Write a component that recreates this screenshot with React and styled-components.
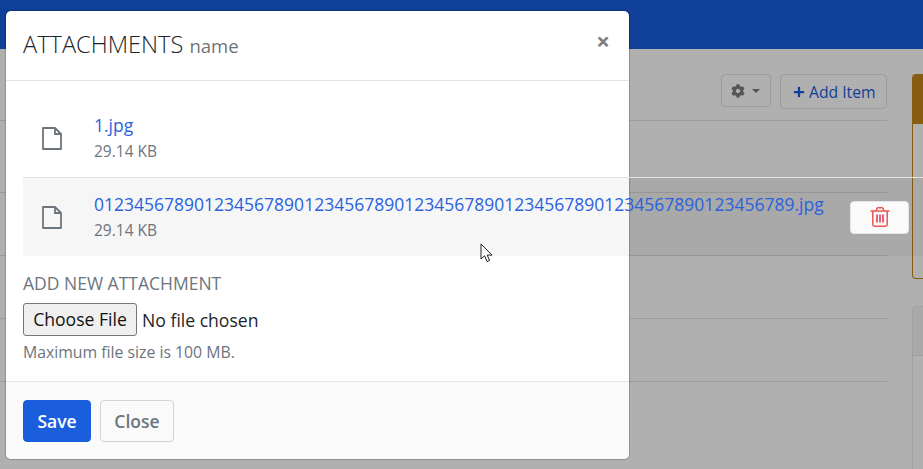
import React from 'react'
import styled, { createGlobalStyle } from 'styled-components'
import { FaCog, FaPlus } from 'react-icons/fa'

const LONG_NAME = '0123456789'.repeat(7) + '.jpg'

const files = [
  { name: '1.jpg', size: '29.14 KB' },
  { name: LONG_NAME, size: '29.14 KB', active: true },
]

function DocIcon() {
  return (
    <svg width="20" height="23" viewBox="0 0 20 23" fill="none" stroke="currentColor" strokeWidth="1.8">
      <path d="M1 1h12l6 6v15H1z" strokeLinejoin="round" />
      <path d="M13 1v6h6" />
    </svg>
  )
}

function TrashIcon() {
  return (
    <svg width="20" height="20" viewBox="0 0 20 20" fill="none" stroke="currentColor" strokeWidth="1.5">
      <path d="M0.500 4h19" />
      <path d="M6 4l1-2.600c.2-.4.500-.6 1-.6h4c.5 0 .8.2 1 .6l1 2.600" />
      <path d="M2.800 4v13.500c0 1 .7 1.700 1.700 1.700h11c1 0 1.700-.7 1.700-1.700V4" />
      <path d="M7 7.500v8M10 7.500v8M13 7.500v8" stroke="#e0304a" />
    </svg>
  )
}

export default function App() {
  return (
    <Page>
      <GlobalStyle />
      <TopBar />
      <Content>
        <Main>
          <Toolbar>
            <SettingsButton>
              <FaCog size={14} />
              <Caret />
            </SettingsButton>
            <AddButton>
              <FaPlus size={12} />
              Add Item
            </AddButton>
          </Toolbar>
          <TableRow $height={72} />
          <TableRow $height={63} />
          <TableRow $height={63} />
          <TableRow $height={63} />
        </Main>
        <Side>
          <Panel $color="#875b10">
            <PanelHead $color="#875b10" />
          </Panel>
          <Panel $color="#a0a0a0" $last>
            <PanelHead $color="#a9a9a9" $line="#9c9c9c" />
          </Panel>
        </Side>
      </Content>

      <Modal>
        <ModalHeader>
          <Title>
            ATTACHMENTS <TitleName>name</TitleName>
          </Title>
          <CloseX>×</CloseX>
        </ModalHeader>
        <ModalBody>
          <FileList>
            {files.map((file) => (
              <FileRow key={file.name} $active={file.active}>
                <FileIcon>
                  <DocIcon />
                </FileIcon>
                <FileInfo>
                  <FileName href="#">{file.name}</FileName>
                  <FileSize>{file.size}</FileSize>
                </FileInfo>
                {file.active && (
                  <DeleteButton>
                    <TrashIcon />
                  </DeleteButton>
                )}
              </FileRow>
            ))}
          </FileList>
          <AddSection>
            <SectionLabel>ADD NEW ATTACHMENT</SectionLabel>
            <FilePicker>
              <ChooseButton>Choose File</ChooseButton>
              <span>No file chosen</span>
            </FilePicker>
            <Hint>Maximum file size is 100 MB.</Hint>
          </AddSection>
        </ModalBody>
        <ModalFooter>
          <SaveButton>Save</SaveButton>
          <CloseButton>Close</CloseButton>
        </ModalFooter>
      </Modal>

      <Pointer width="14" height="20" viewBox="0 0 14 20">
        <path
          d="M1 1v15l3.6-3.2L7 18.500l2.600-1.100-2.400-5.300H12z"
          fill="#fff"
          stroke="#222"
          strokeWidth="1"
        />
      </Pointer>
    </Page>
  )
}

const GlobalStyle = createGlobalStyle`
  html, body {
    margin: 0;
    padding: 0;
    height: 100%;
    overflow: hidden;
  }
  body {
    font-family: "Open Sans", "Noto Sans", sans-serif;
  }
`

const Page = styled.div`
  position: relative;
  width: 923px;
  height: 469px;
  overflow: hidden;
  background: #b0b0b0;
`

const TopBar = styled.div`
  height: 49px;
  background: #0f3f96;
`

const Content = styled.div`
  display: flex;
  justify-content: space-between;
  padding-top: 25px;
`

const Main = styled.div`
  width: 887px;
`

const Toolbar = styled.div`
  display: flex;
  justify-content: flex-end;
  align-items: flex-start;
  gap: 9px;
  height: 46px;
  border-bottom: 1px solid #9c9c9c;
`

const ToolButton = styled.div`
  display: flex;
  align-items: center;
  box-sizing: border-box;
  border: 1px solid #9c9c9c;
  border-radius: 4px;
`

const SettingsButton = styled(ToolButton)`
  width: 50px;
  height: 33px;
  padding-left: 9px;
  gap: 7px;
  color: #555;
`

const Caret = styled.span`
  border-left: 4.5px solid transparent;
  border-right: 4.5px solid transparent;
  border-top: 4.5px solid #555;
`

const AddButton = styled(ToolButton)`
  width: 107px;
  height: 35px;
  padding-left: 12px;
  gap: 4px;
  color: #123f96;
  font-size: 15.7px;
  font-weight: 500;
`

const TableRow = styled.div`
  box-sizing: border-box;
  height: ${(p) => p.$height}px;
  border-bottom: 1px solid #9c9c9c;
`

const Side = styled.div`
  display: flex;
  flex-direction: column;
  gap: 27px;
  width: 11px;
`

const Panel = styled.div`
  box-sizing: border-box;
  height: ${(p) => (p.$last ? '200px' : '205px')};
  border: 1px solid ${(p) => p.$color};
  border-right: 0;
  border-radius: 4px 0 0 4px;
`

const PanelHead = styled.div`
  height: 48px;
  background: ${(p) => p.$color};
  border-bottom: 1px solid ${(p) => p.$line || p.$color};
  border-top-left-radius: 3px;
`

const Modal = styled.div`
  position: absolute;
  left: 6px;
  top: 11px;
  display: flex;
  flex-direction: column;
  box-sizing: border-box;
  width: 623px;
  height: 448px;
  background: #fff;
  border-radius: 5px;
  box-shadow: 0 0 1px 1px rgba(0, 0, 0, 0.18);
`

const ModalHeader = styled.div`
  display: flex;
  justify-content: space-between;
  align-items: flex-start;
  box-sizing: border-box;
  height: 70px;
  padding: 17px 20px 0 17px;
  border-bottom: 1px solid #e2e5ec;
`

const Title = styled.div`
  font-size: 23.6px;
  font-weight: 300;
  line-height: 32px;
  color: #212529;
`

const TitleName = styled.span`
  font-size: 18.500px;
  font-weight: 400;
  color: #6c757d;
`

const CloseX = styled.div`
  font-size: 24px;
  font-weight: 700;
  line-height: 26px;
  color: #7d7d7d;
  transform: translateX(1px);
`

const ModalBody = styled.div`
  flex: 1;
  padding: 19px 17px 0;
`

const FileList = styled.div`
  width: 900px;
`

const FileRow = styled.div`
  display: flex;
  align-items: center;
  box-sizing: border-box;
  height: ${(p) => (p.$active ? '79px' : '77px')};
  padding: 0 14px 0 19px;
  background: ${(p) => (p.$active ? 'rgba(0, 0, 0, 0.034)' : 'transparent')};
  border-top: ${(p) => (p.$active ? '1px solid #e2e2e2' : '0')};
`

const FileIcon = styled.div`
  display: flex;
  width: 52px;
  color: #6c757d;
`

const FileInfo = styled.div`
  flex: 1;
  display: flex;
  flex-direction: column;
  gap: 4px;
  margin-top: -3px;
`

const FileName = styled.a`
  font-size: 17.5px;
  line-height: 24px;
  color: #2a62dd;
  text-decoration: none;
`

const FileSize = styled.div`
  font-size: 15.5px;
  line-height: 20px;
  color: #6c757d;
`

const DeleteButton = styled.div`
  display: flex;
  align-items: center;
  justify-content: center;
  box-sizing: border-box;
  width: 59px;
  height: 33px;
  background: #fafafa;
  border: 1px solid #e6e6e6;
  border-radius: 4px;
  color: #e5594f;
`

const AddSection = styled.div`
  padding-top: 15px;
`

const SectionLabel = styled.div`
  font-size: 17.5px;
  line-height: 24px;
  color: #6c757d;
`

const FilePicker = styled.div`
  display: flex;
  align-items: center;
  gap: 5px;
  margin-top: 8px;
  font-size: 17.6px;
  color: #212529;
`

const ChooseButton = styled.div`
  box-sizing: border-box;
  width: 114px;
  height: 33px;
  line-height: 31px;
  text-align: center;
  background: #efefef;
  border: 1px solid #767676;
  border-radius: 3px;
  color: #111;
`

const Hint = styled.div`
  margin-top: 6px;
  font-size: 15.8px;
  line-height: 20px;
  color: #6c757d;
`

const ModalFooter = styled.div`
  display: flex;
  align-items: center;
  gap: 9px;
  box-sizing: border-box;
  height: 78px;
  padding-left: 17px;
  background: #fafafa;
  border-top: 1px solid #e2e5ec;
  border-radius: 0 0 5px 5px;
`

const FooterButton = styled.div`
  box-sizing: border-box;
  height: 42px;
  line-height: 40px;
  text-align: center;
  border-radius: 4px;
  font-size: 17.5px;
  font-weight: 600;
`

const SaveButton = styled(FooterButton)`
  width: 68px;
  background: #1a5ede;
  border: 1px solid #1a5ede;
  color: #fff;
`

const CloseButton = styled(FooterButton)`
  width: 74px;
  border: 1px solid #ced4da;
  color: #6c757d;
`

const Pointer = styled.svg`
  position: absolute;
  left: 480px;
  top: 243px;
`
